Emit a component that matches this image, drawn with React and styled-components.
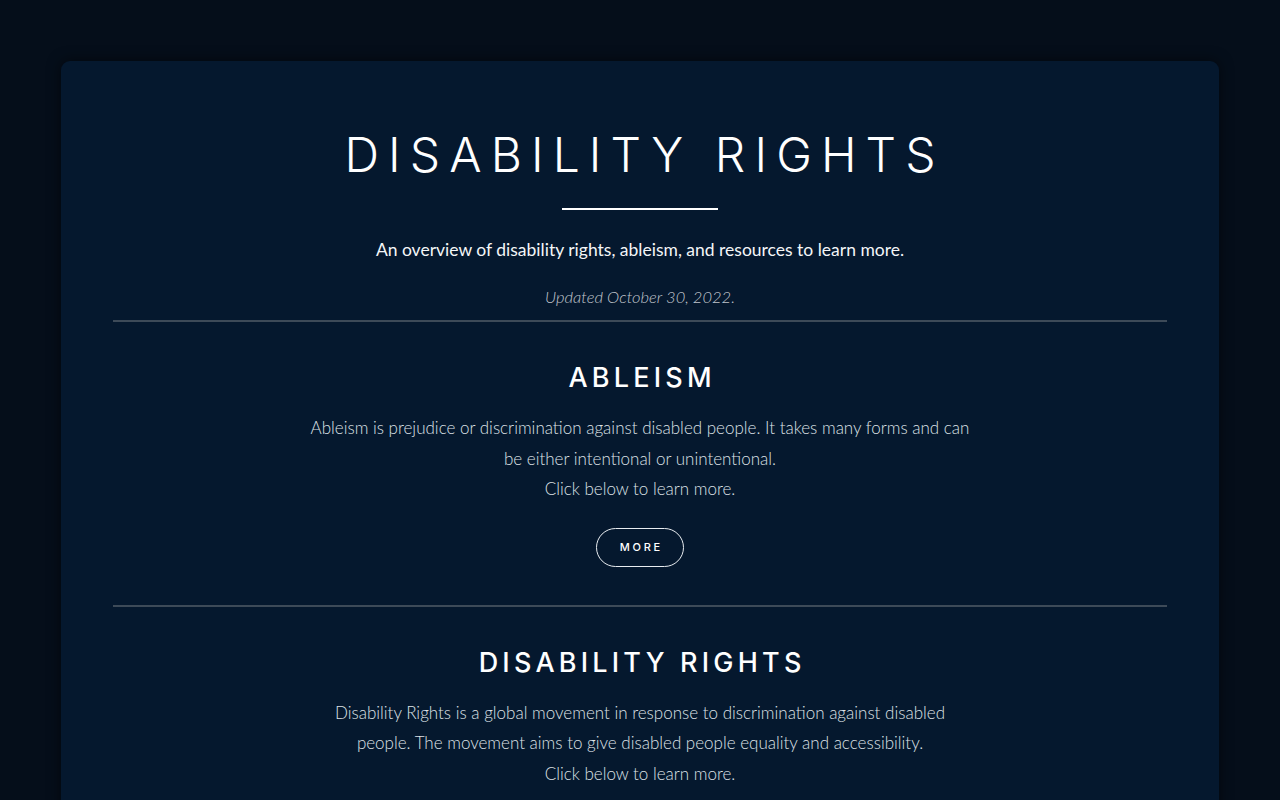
import React from 'react';
import styled, { createGlobalStyle } from 'styled-components';

const GlobalStyle = createGlobalStyle`
    html, body {
        margin: 0;
        padding: 0;
        background: #050e1a;
    }
    body {
        font-family: Lato, "Liberation Sans", sans-serif;
    }
`;

const sections = [
    {
        title: 'ABLEISM',
        text: 'Ableism is prejudice or discrimination against disabled people. It takes many forms and can be either intentional or unintentional.',
    },
    {
        title: 'DISABILITY RIGHTS',
        text: 'Disability Rights is a global movement in response to discrimination against disabled people. The movement aims to give disabled people equality and accessibility.',
    },
];

const App = () => (
    <Page>
        <GlobalStyle />
        <Card>
            <Header>
                <Title>DISABILITY RIGHTS</Title>
                <TitleRule />
                <Subtitle>An overview of disability rights, ableism, and resources to learn more.</Subtitle>
                <Updated>Updated October 30, 2022.</Updated>
            </Header>
            {sections.map((s) => (
                <Section key={s.title}>
                    <SectionTitle>{s.title}</SectionTitle>
                    <Body>
                        {s.text}
                        <br />
                        Click below to learn more.
                    </Body>
                    <MoreButton>MORE</MoreButton>
                </Section>
            ))}
        </Card>
    </Page>
);

export default App;

const Page = styled.div`
    min-height: 100vh;
    padding: 61px 61px 40px;
    box-sizing: border-box;
    background: #050e1a;
`;

const Card = styled.main`
    background: #05182e;
    border-radius: 9px;
    padding: 64px 52px 40px;
    box-shadow: 0 0 14px rgba(0, 0, 0, 0.55);
`;

const Header = styled.header`
    display: flex;
    flex-direction: column;
    align-items: center;
    text-align: center;
    padding-bottom: 11px;
    border-bottom: 2px solid #3d4a58;
`;

const Title = styled.h1`
    margin: 0;
    font-family: Inter, "Liberation Sans", sans-serif;
    font-weight: 300;
    font-size: 48px;
    line-height: 60px;
    letter-spacing: 0.19em;
    margin-right: -0.19em;
    color: #ffffff;
`;

const TitleRule = styled.div`
    width: 156px;
    height: 2px;
    background: #ffffff;
    margin-top: 23px;
`;

const Subtitle = styled.p`
    margin: 28px 0 0;
    font-size: 17.5px;
    line-height: 24px;
    font-weight: 400;
    color: #f4f6f8;
`;

const Updated = styled.p`
    margin: 23px 0 0;
    font-size: 16.5px;
    line-height: 24px;
    font-style: italic;
    font-weight: 300;
    color: #c0c5cc;
`;

const Section = styled.section`
    display: flex;
    flex-direction: column;
    align-items: center;
    text-align: center;
    padding: 39px 0 38px;
    border-bottom: 2px solid #3d4a58;
`;

const SectionTitle = styled.h2`
    margin: 0;
    font-family: Inter, "Liberation Sans", sans-serif;
    font-weight: 500;
    font-size: 27px;
    line-height: 34px;
    letter-spacing: 0.156em;
    margin-right: -0.156em;
    color: #ffffff;
`;

const Body = styled.p`
    margin: 18px 0 0;
    max-width: 662px;
    font-size: 17px;
    line-height: 30.5px;
    font-weight: 300;
    color: #dde1e6;
`;

const MoreButton = styled.button`
    margin-top: 23px;
    width: 88px;
    height: 39px;
    border: 1px solid #e8ecf0;
    border-radius: 20px;
    background: transparent;
    color: #ffffff;
    font-family: Inter, "Liberation Sans", sans-serif;
    font-size: 11px;
    font-weight: 500;
    letter-spacing: 0.25em;
    padding: 0 0 0 0.25em;
    cursor: pointer;
`;
